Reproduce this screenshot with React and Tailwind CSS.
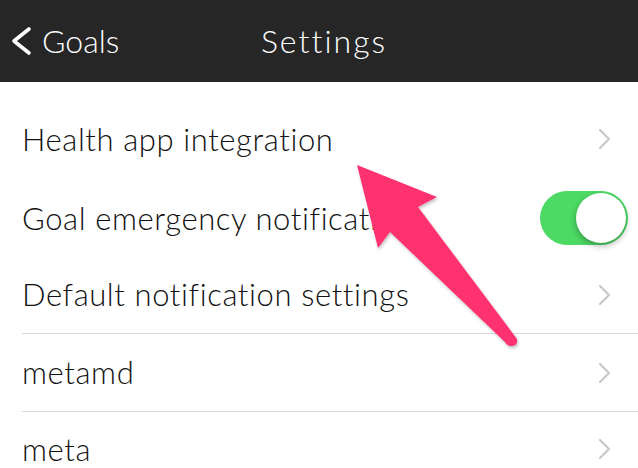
import React from 'react';

function Chevron() {
  return (
    <svg className="w-[14px] h-[22px] shrink-0" viewBox="0 0 14 22" fill="none">
      <path d="M2 2l9 9-9 9" stroke="#c7c7cc" strokeWidth="2.2" strokeLinecap="round" strokeLinejoin="round" />
    </svg>
  );
}

function Toggle() {
  return (
    <div className="w-[88px] h-[54px] rounded-full bg-[#4cd964] relative shrink-0">
      <div className="absolute right-[2px] top-[2px] w-[50px] h-[50px] rounded-full bg-white shadow-[0_3px_6px_rgba(0,0,0,0.3)]" />
    </div>
  );
}

export default function App() {
  return (
    <div className="w-[638px] h-[468px] bg-white overflow-hidden relative" style={{ fontFamily: 'Lato, "Open Sans", sans-serif' }}>
      <div className="h-[82px] bg-[#262626] flex items-center relative text-white">
        <div className="flex items-center pl-[9px] gap-[9px]">
          <svg className="w-[24px] h-[30px]" viewBox="0 0 24 30" fill="none">
            <path d="M20 3L5 15l15 12" stroke="white" strokeWidth="3.6" strokeLinecap="round" strokeLinejoin="round" />
          </svg>
          <span className="text-[32px] font-light">Goals</span>
        </div>
        <span className="absolute left-0 right-0 text-center text-[32px] font-light tracking-[2px] pointer-events-none pl-[10px]">Settings</span>
      </div>
      <div className="pt-[16px] font-light text-[31px] tracking-[0.6px] text-[#111]">
        <div className="flex items-center pl-[22px] pr-[26px] h-[82px]">
          <span className="flex-1">Health app integration</span>
          <Chevron />
        </div>
        <div className="flex items-center pl-[22px] pr-[10px] h-[76px]">
          <span className="flex-1">Goal emergency notifications</span>
          <Toggle />
        </div>
        <div className="ml-[22px] border-b border-[#d9d9dd] flex items-center pr-[26px] h-[78px]">
          <span className="flex-1">Default notification settings</span>
          <Chevron />
        </div>
        <div className="ml-[22px] border-b border-[#d9d9dd] flex items-center pr-[26px] h-[78px]">
          <span className="flex-1">metamd</span>
          <Chevron />
        </div>
        <div className="ml-[22px] flex items-center pr-[26px] h-[74px]">
          <span className="flex-1">meta</span>
          <Chevron />
        </div>
      </div>
      <svg className="absolute left-0 top-0 pointer-events-none" width="638" height="468" viewBox="0 0 638 468">
        <defs>
          <filter id="sh" x="-20%" y="-20%" width="140%" height="140%">
            <feDropShadow dx="1" dy="2" stdDeviation="1.5" floodColor="#000" floodOpacity="0.25" />
          </filter>
        </defs>
        <path
          d="M357 165 L437 197 L418 207 L517 339 Q518 346 511 346 Q507 346 505 342 L390 232 L378 248 Z"
          fill="#ff3170"
          filter="url(#sh)"
        />
      </svg>
    </div>
  );
}
